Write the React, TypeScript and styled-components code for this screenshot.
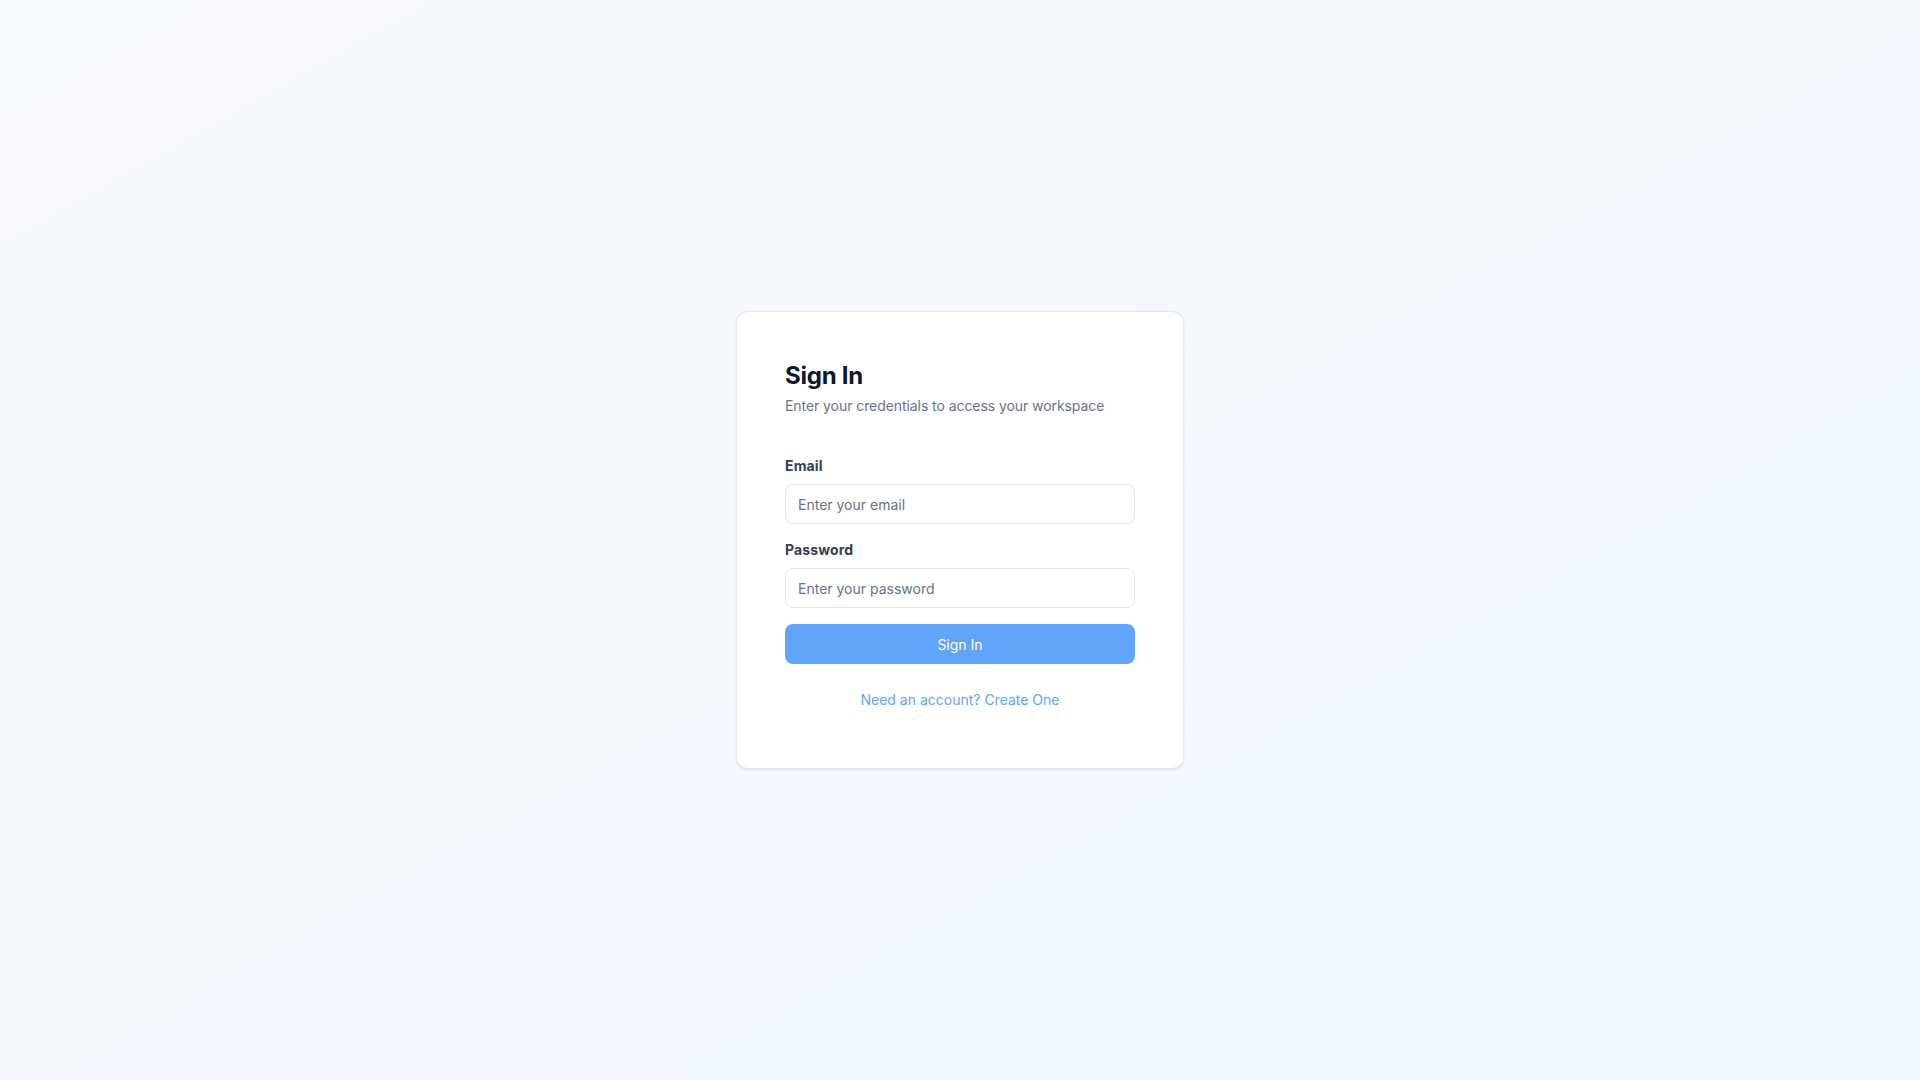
import React from "react";
import styled, {createGlobalStyle} from "styled-components";

const GlobalStyle = createGlobalStyle`
  * {
    box-sizing: border-box;
  }

  html, body {
    margin: 0;
    padding: 0;
  }

  body {
    font-family: Inter, "Noto Sans", "Liberation Sans", sans-serif;
    -webkit-font-smoothing: antialiased;
  }
`;

const Page = styled.div`
  min-height: 100vh;
  display: flex;
  align-items: center;
  justify-content: center;
  background: linear-gradient(to bottom right, #f8fafc, #eff6ff);
`;

const Card = styled.div`
  width: 448px;
  padding: 48px 48px 58px;
  background: #ffffff;
  border: 1px solid #e2e8f0;
  border-radius: 12px;
  box-shadow: 0 1px 3px rgba(15, 23, 42, 0.06), 0 1px 2px rgba(15, 23, 42, 0.04);
`;

const Header = styled.div`
  margin-bottom: 40px;
`;

const Title = styled.h1`
  margin: 0;
  font-size: 24px;
  line-height: 32px;
  font-weight: 700;
  color: #0f172a;
  letter-spacing: -0.01em;
`;

const Subtitle = styled.p`
  margin: 4px 0 0;
  font-size: 14px;
  line-height: 20px;
  color: #64748b;
  letter-spacing: -0.005em;
`;

const Form = styled.form`
  display: flex;
  flex-direction: column;
  gap: 16px;
`;

const Field = styled.div`
  display: flex;
  flex-direction: column;
  gap: 8px;
`;

const Label = styled.label`
  font-size: 14px;
  line-height: 20px;
  font-weight: 700;
  color: #334155;
  letter-spacing: 0.01em;
`;

const Input = styled.input`
  height: 40px;
  width: 100%;
  padding: 1px 12px 0;
  border: 1px solid #e2e8f0;
  border-radius: 8px;
  background: #ffffff;
  font-family: inherit;
  font-size: 14px;
  color: #0f172a;
  outline: none;

  &::placeholder {
    color: #64748b;
  }
`;

const SubmitButton = styled.button`
  height: 40px;
  width: 100%;
  border: none;
  border-radius: 8px;
  background: #60a5fa;
  color: #ffffff;
  font-family: inherit;
  font-size: 14px;
  font-weight: 400;
  cursor: pointer;
`;

const Footer = styled.div`
  margin-top: 25px;
  text-align: center;
`;

const FooterLink = styled.a`
  font-size: 14px;
  line-height: 20px;
  color: #60a5fa;
  text-decoration: none;
  cursor: pointer;
`;

const App: React.FC = () => {
    return (
        <>
            <GlobalStyle/>
            <Page>
                <Card>
                    <Header>
                        <Title>Sign In</Title>
                        <Subtitle>Enter your credentials to access your workspace</Subtitle>
                    </Header>
                    <Form onSubmit={(e) => e.preventDefault()}>
                        <Field>
                            <Label htmlFor="email">Email</Label>
                            <Input id="email" type="email" placeholder="Enter your email"/>
                        </Field>
                        <Field>
                            <Label htmlFor="password">Password</Label>
                            <Input id="password" type="password" placeholder="Enter your password"/>
                        </Field>
                        <SubmitButton type="submit">Sign In</SubmitButton>
                    </Form>
                    <Footer>
                        <FooterLink>Need an account? Create One</FooterLink>
                    </Footer>
                </Card>
            </Page>
        </>
    );
};

export default App;
